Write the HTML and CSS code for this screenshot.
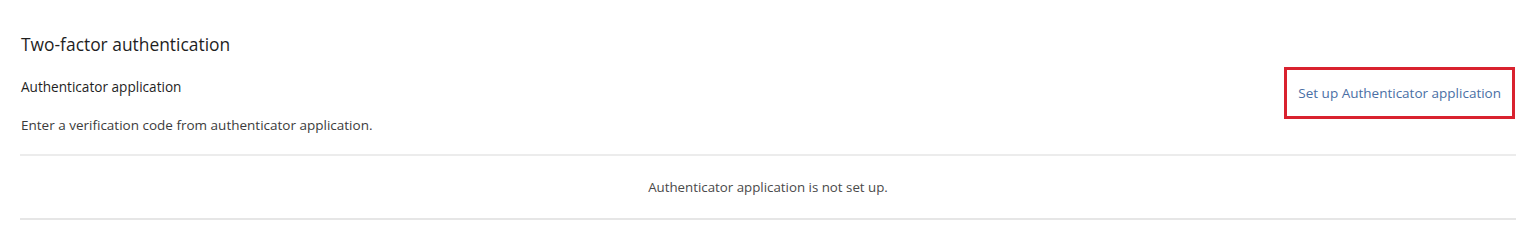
FILE: index.html
```html
<!DOCTYPE html>
<html lang="en">
<head>
<meta charset="utf-8">
<title>Two-factor authentication</title>
<link rel="stylesheet" href="styles.css">
</head>
<body>
<main class="page">
  <h2 class="section-title">Two-factor authentication</h2>
  <div class="item-head">
    <h3 class="item-title">Authenticator application</h3>
    <a class="setup-link" href="#">Set up Authenticator application</a>
  </div>
  <p class="item-desc">Enter a verification code from authenticator application.</p>
  <div class="empty-state">Authenticator application is not set up.</div>
</main>
</body>
</html>
```
FILE: styles.css
```css
html, body {
  margin: 0;
  padding: 0;
  background: #ffffff;
}
body {
  font-family: "Open Sans", "Noto Sans", "Liberation Sans", sans-serif;
  color: #151515;
}
.page {
  padding: 32px 20px 0 20px;
}
.section-title {
  margin: 0 0 0 1px;
  font-size: 17.4px;
  font-weight: 400;
  line-height: 24px;
  color: #1f1f1f;
}
.item-head {
  display: flex;
  justify-content: space-between;
  align-items: center;
  margin-top: 11px;
  margin-right: 1px;
}
.item-title {
  margin: 0 0 0 1px;
  font-size: 13.6px;
  font-weight: 400;
  line-height: 20px;
  color: #1f1f1f;
  align-self: flex-start;
  margin-top: 10px;
}
.setup-link {
  display: block;
  border: 3px solid #d9222f;
  padding: 0 11px 0 11px;
  height: 46px;
  line-height: 47px;
  font-size: 13.5px;
  color: #4a6fa5;
  text-decoration: none;
}
.item-desc {
  margin: -4px 0 0 1px;
  font-size: 13.5px;
  line-height: 20px;
  color: #3c3c3c;
}
.empty-state {
  margin-top: 19px;
  border-top: 2px solid #ececec;
  border-bottom: 2px solid #e6e6e6;
  height: 62px;
  line-height: 62px;
  text-align: center;
  font-size: 13.3px;
  color: #4a4a4a;
}
```
